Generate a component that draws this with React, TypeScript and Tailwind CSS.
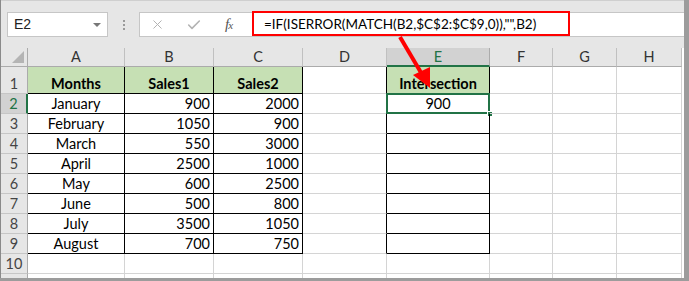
import { X, Check } from 'lucide-react';

const COLS = ['A', 'B', 'C', 'D', 'E', 'F', 'G', 'H'];

// sheet values by row number (1-based); columns A, B, C, D, E
const DATA: Record<number, (string | number)[]> = {
  1: ['Months', 'Sales1', 'Sales2', '', 'Intersection'],
  2: ['January', 900, 2000, '', 900],
  3: ['February', 1050, 900],
  4: ['March', 550, 3000],
  5: ['April', 2500, 1000],
  6: ['May', 600, 2500],
  7: ['June', 500, 800],
  8: ['July', 3500, 1050],
  9: ['August', 700, 750],
};

const inTable = (r: number, c: number) => r >= 1 && r <= 9 && (c <= 2 || c === 4);

function Cell({ r, c }: { r: number; c: number }) {
  const value = DATA[r]?.[c] ?? '';
  const right = inTable(r, c) || inTable(r, c + 1) ? 'border-r-black' : 'border-r-[#d4d4d4]';
  const bottom = inTable(r, c) || inTable(r + 1, c) ? 'border-b-black' : 'border-b-[#d4d4d4]';
  const header = r === 1 && inTable(r, c);
  const numeric = typeof value === 'number' && c !== 4;
  const selected = r === 2 && c === 4;

  return (
    <div
      className={`relative flex items-end pb-px border-r border-b ${right} ${bottom} ${
        header ? 'bg-[#c6e0b4] font-bold justify-center' : numeric ? 'justify-end pr-[3px]' : 'justify-center'
      }`}
    >
      <span className="leading-[17px] text-black">{value}</span>
      {selected && (
        <>
          <div className="absolute -inset-px border-2 border-[#217346]" />
          <div className="absolute -right-[4px] -bottom-[4px] w-[6px] h-[6px] bg-[#217346] border border-white" />
        </>
      )}
    </div>
  );
}

function RowHeader({ r }: { r: number }) {
  const active = r === 2;
  return (
    <div
      className={`flex items-end justify-center pb-px border-b border-b-[#c6c6c6] ${
        active
          ? 'bg-[#d2d2d2] text-[#217346] border-r-2 border-r-[#217346]'
          : 'bg-[#e6e6e6] text-[#444] border-r border-r-[#ababab]'
      }`}
    >
      <span className="leading-[17px]">{r <= 10 ? r : ''}</span>
    </div>
  );
}

export default function App() {
  const rows = [1, 2, 3, 4, 5, 6, 7, 8, 9, 10, 11];

  return (
    <div className="relative w-[689px] h-[281px] overflow-hidden bg-white font-['Lato',sans-serif] text-[14.5px] flex flex-col">
      <div className="h-[278px] overflow-hidden border-l border-l-[#8a8a8a] border-r-[5px] border-r-[#9c9c9c] flex flex-col">
        {/* Formula bar */}
        <div className="h-[48px] shrink-0 bg-[#e6e6e6] border-t border-t-[#cfcfcf] flex items-start pt-[11px]">
          <div className="ml-[6px] w-[101px] h-[25px] bg-white border border-[#c6c6c6] flex items-center pl-[6px] pr-[6px]">
            <span className="flex-1 text-[#222] font-['Liberation_Sans',sans-serif] text-[14px]">E2</span>
            <span className="w-0 h-0 border-l-[4px] border-r-[4px] border-t-[4px] border-l-transparent border-r-transparent border-t-[#777]" />
          </div>
          <div className="w-[31px] h-[25px] flex flex-col items-center justify-center gap-[2px]">
            <span className="w-[2px] h-[2px] bg-[#9a9a9a]" />
            <span className="w-[2px] h-[2px] bg-[#9a9a9a]" />
            <span className="w-[2px] h-[2px] bg-[#9a9a9a]" />
          </div>
          <div className="flex-1 h-[25px] bg-white border-y border-l border-[#c6c6c6] flex items-center">
            <span className="w-[35px] flex justify-center text-[#b3b3b3]">
              <X size={15} strokeWidth={1.6} />
            </span>
            <span className="w-[37px] flex justify-center text-[#b3b3b3]">
              <Check size={16} strokeWidth={2.4} />
            </span>
            <span className="w-[34px] flex justify-center text-[#555] font-['Liberation_Serif',serif] italic text-[15px] leading-none">
              f<span className="text-[11px] -ml-px mt-[3px]">x</span>
            </span>
            <span className="pl-[18px] text-black text-[13.5px] font-['Lato',sans-serif]">
              =IF(ISERROR(MATCH(B2,$C$2:$C$9,0)),"",B2)
            </span>
          </div>
        </div>

        {/* Sheet grid */}
        <div className="grid grid-cols-[27px_97px_89px_89px_84px_103px_63px_64px_65px] grid-rows-[19px_27px_repeat(10,20px)]">
          <div className="relative bg-[#e6e6e6] border-r border-b border-[#ababab]">
            <div className="absolute right-[3px] bottom-[3px] w-[12px] h-[12px] bg-[#b4b4b4] [clip-path:polygon(100%_0,100%_100%,0_100%)]" />
          </div>
          {COLS.map((col, i) =>
            i === 4 ? (
              <div
                key={col}
                className="flex items-center justify-center bg-[#d2d2d2] text-[#217346] border-r border-r-[#ababab] border-b-2 border-b-[#217346]"
              >
                {col}
              </div>
            ) : (
              <div
                key={col}
                className="flex items-center justify-center bg-[#e6e6e6] text-[#333] border-r border-r-[#c0c0c0] border-b border-b-[#ababab]"
              >
                {col}
              </div>
            )
          )}
          {rows.map(r => (
            <div key={r} className="contents">
              <RowHeader r={r} />
              {COLS.map((col, c) => (
                <Cell key={col} r={r} c={c} />
              ))}
            </div>
          ))}
        </div>
      </div>
      <div className="h-[3px] bg-[#9c9c9c]" />

      {/* Annotation overlay */}
      <div className="absolute left-[252px] top-[11px] w-[318px] h-[25px] border-2 border-[#ff0000] pointer-events-none" />
      <svg className="absolute inset-0 pointer-events-none" width={689} height={281}>
        <line x1={400} y1={37} x2={423} y2={76} stroke="#ff0000" strokeWidth={4} />
        <polygon points="430,88 413,75 430,67" fill="#ff0000" />
      </svg>
    </div>
  );
}
